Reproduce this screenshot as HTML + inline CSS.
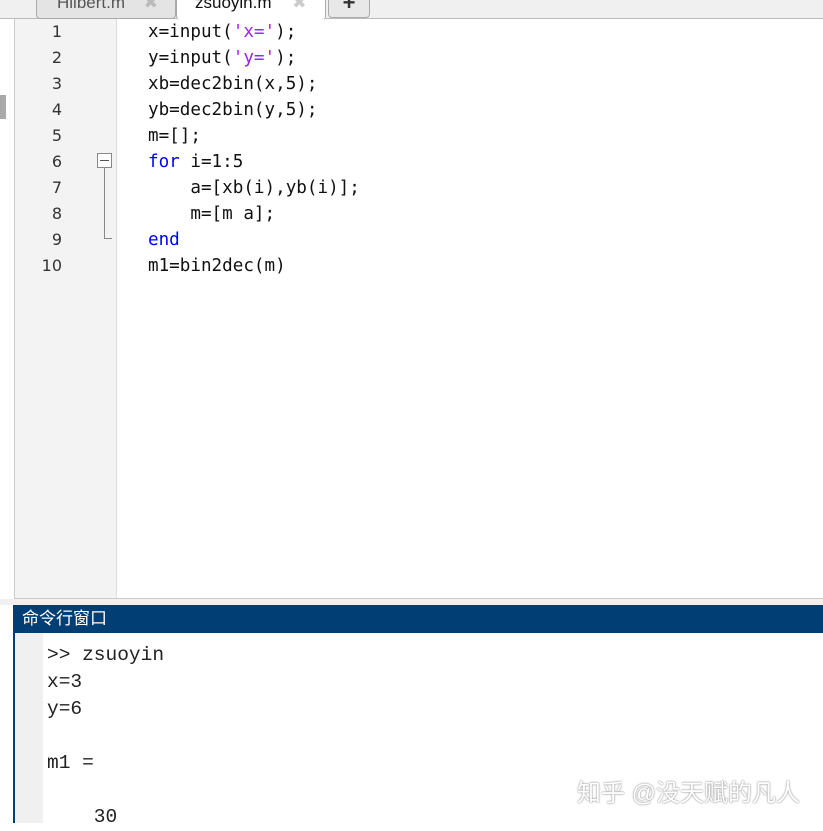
<!DOCTYPE html>
<html><head><meta charset="utf-8"><style>
body{margin:0;width:823px;height:823px;overflow:hidden;background:#fff;position:relative;font-family:"Liberation Sans","Noto Sans CJK SC",sans-serif}
div{position:absolute;box-sizing:border-box}
.code{font-family:"DejaVu Sans Mono","Liberation Mono",monospace;font-size:17.6px;line-height:26px;white-space:pre;color:#111}
.ln{font-family:"DejaVu Sans",sans-serif;font-size:16px;line-height:26px;color:#333;text-align:right;width:50px;left:12px}
.cmd{font-family:"Liberation Mono",monospace;font-size:19.5px;line-height:27px;white-space:pre;color:#222}
.s{color:#a020f0}.k{color:#0000ff}
</style></head><body>
<div style="left:0;top:0;width:823px;height:19px;background:#f0f0f0;border-bottom:1px solid #bbb"></div>
<div style="left:36px;top:-6px;width:140px;height:25px;background:#e4e4e4;border:1px solid #aaa;border-radius:4px;font-size:17px;color:#555;padding-left:20px;line-height:16px">Hilbert.m <span style="color:#bbb;margin-left:14px">✖</span></div>
<div style="left:176px;top:-6px;width:150px;height:26px;background:#fff;border:1px solid #aaa;border-bottom:none;border-radius:4px;font-size:17px;color:#111;padding-left:18px;line-height:16px">zsuoyin.m <span style="color:#ccc;margin-left:16px">✖</span></div>
<div style="left:328px;top:-6px;width:42px;height:24px;background:#e8e8e8;border:1px solid #aaa;border-radius:4px;font-size:22px;font-weight:bold;text-align:center;line-height:16px;color:#333">+</div>
<div style="left:0;top:95px;width:6px;height:24px;background:#aaa"></div>
<div style="left:14px;top:19px;width:809px;height:580px;border-left:1px solid #ccc;border-bottom:1px solid #ccc"></div>
<div style="left:15px;top:19px;width:102px;height:579px;background:#f3f3f3;border-right:1px solid #ddd"></div>
<div class="ln" style="top:19px">1<br>2<br>3<br>4<br>5<br>6<br>7<br>8<br>9<br>10</div>
<div style="left:97px;top:153px;width:15px;height:15px;border:1px solid #888;background:#fff"></div>
<div style="left:100px;top:160px;width:9px;height:1px;background:#555"></div>
<div style="left:104px;top:168px;width:1px;height:70px;background:#888"></div>
<div style="left:104px;top:238px;width:8px;height:1px;background:#888"></div>
<div class="code" style="left:148px;top:19px">x=input(<span class="s">'x='</span>);
y=input(<span class="s">'y='</span>);
xb=dec2bin(x,5);
yb=dec2bin(y,5);
m=[];
<span class="k">for</span> i=1:5
    a=[xb(i),yb(i)];
    m=[m a];
<span class="k">end</span>
m1=bin2dec(m)</div>
<div style="left:0;top:599px;width:823px;height:6px;background:#f0f0f0"></div>
<div style="left:13px;top:605px;width:810px;height:28px;background:#003e74;color:#fff;font-size:17px;line-height:28px;padding-left:9px">命令行窗口</div>
<div style="left:13px;top:633px;width:2px;height:190px;background:#003e74"></div>
<div style="left:15px;top:633px;width:28px;height:190px;background:#f0f0f0"></div>
<div class="cmd" style="left:47px;top:642px">&gt;&gt; zsuoyin
x=3
y=6

m1 =

    30</div>
<div style="left:577px;top:773px;font-size:24px;color:#fff;text-shadow:0 0 2px #999,0 0 1px #888;white-space:nowrap">知乎 @没天赋的凡人</div>
</body></html>
